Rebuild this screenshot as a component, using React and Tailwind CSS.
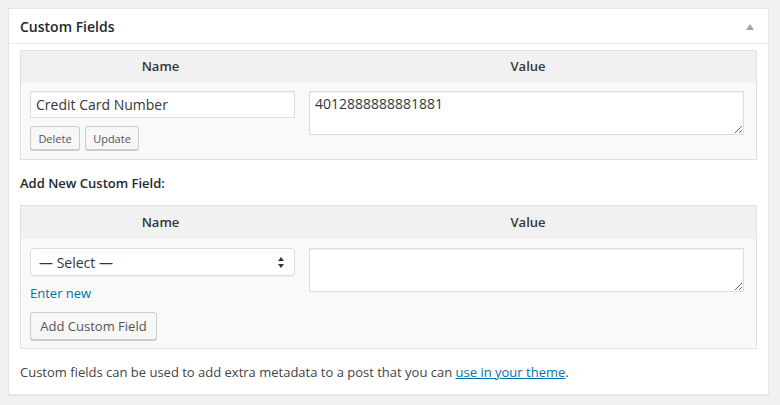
import React from "react";

const font = { fontFamily: '"Open Sans", "Liberation Sans", sans-serif' };

const Btn = ({ children, className = "" }) => (
  <button
    className={`border border-[#cccccc] bg-[#f7f7f7] text-[#555] rounded-[3px] shadow-[0_1px_0_#cccccc] leading-none ${className}`}
  >
    {children}
  </button>
);

const Textarea = ({ value = "" }) => (
  <textarea
    readOnly
    defaultValue={value}
    className="block w-[435px] h-[44px] border border-[#dddddd] bg-white shadow-[inset_0_1px_2px_rgba(0,0,0,0.07)] px-[5px] py-[2px] text-[14px] text-[#32373c] leading-[20px] resize-y outline-none"
    style={font}
  />
);

const TableHead = ({ h }) => (
  <div className={`grid grid-cols-[279px_1fr] bg-[#f1f1f1] text-[13px] font-semibold text-[#32373c] ${h}`}>
    <div className="flex items-center justify-center">Name</div>
    <div className="flex items-center justify-center">Value</div>
  </div>
);

export default function App() {
  return (
    <div className="w-[780px] h-[405px] bg-[#f1f1f1] pt-2 pl-2 text-[#444]" style={font}>
      <div className="w-[761px] h-[387px] bg-white border border-[#e5e5e5] shadow-[0_1px_1px_rgba(0,0,0,0.04)]">
        {/* header */}
        <div className="h-[35px] border-b border-[#eeeeee] flex items-center justify-between pl-[11px] pr-[14px]">
          <h2 className="text-[14px] font-semibold text-[#23282d]">Custom Fields</h2>
          <svg width="8" height="6" viewBox="0 0 8 6" className="mt-[1px]">
            <path d="M4 0 L8 6 L0 6 Z" fill="#a0a5aa" />
          </svg>
        </div>

        <div className="px-[11px] pt-[6px]">
          {/* existing field */}
          <div className="border border-[#e1e1e1]">
            <TableHead h="h-[31px]" />
            <div className="bg-[#f9f9f9] flex gap-[14px] pl-[9px] pt-[9px] pb-[9px]">
              <div className="w-[265px] flex flex-col gap-[8px]">
                <input
                  readOnly
                  value="Credit Card Number"
                  className="h-[27px] w-full border border-[#dddddd] bg-white shadow-[inset_0_1px_2px_rgba(0,0,0,0.07)] px-[5px] text-[14px] text-[#32373c] outline-none"
                  style={font}
                />
                <div className="flex gap-[5px]">
                  <Btn className="h-[24px] w-[50px] text-[11px]">Delete</Btn>
                  <Btn className="h-[24px] w-[54px] text-[11px]">Update</Btn>
                </div>
              </div>
              <Textarea value="4012888888881881" />
            </div>
          </div>

          <p className="mt-[14px] text-[13px] font-semibold text-[#23282d] leading-[18px]">Add New Custom Field:</p>

          {/* new field */}
          <div className="border border-[#e1e1e1] mt-[13px]">
            <TableHead h="h-[33px]" />
            <div className="bg-[#f9f9f9] flex gap-[14px] pl-[9px] pt-[9px] pb-[8px]">
              <div className="w-[265px] flex flex-col">
                <div className="h-[28px] w-full border border-[#dddddd] bg-white rounded-[4px] shadow-[0_1px_1px_rgba(0,0,0,0.05)] flex items-center justify-between pl-[8px] pr-[10px] text-[14px] text-[#32373c]">
                  <span>— Select —</span>
                  <svg width="6" height="11" viewBox="0 0 6 11">
                    <path d="M3 0 L6 4 L0 4 Z M3 11 L6 7 L0 7 Z" fill="#333" />
                  </svg>
                </div>
                <a href="#" className="mt-[8px] text-[13px] text-[#0073aa] leading-[18px]">Enter new</a>
                <Btn className="mt-[10px] h-[28px] w-[127px] text-[13px]">Add Custom Field</Btn>
              </div>
              <Textarea />
            </div>
          </div>

          <p className="mt-[14px] text-[13px] leading-[18px] text-[#444]">
            Custom fields can be used to add extra metadata to a post that you can{" "}
            <a href="#" className="text-[#0073aa] underline">use in your theme</a>.
          </p>
        </div>
      </div>
    </div>
  );
}
